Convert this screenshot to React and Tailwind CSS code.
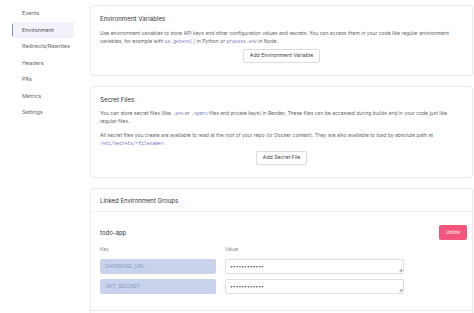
import React from "react";

const Code = ({ children }) => (
  <code className="font-['Liberation_Mono',monospace] text-[4.6px] leading-none text-[#6a6fc0]">{children}</code>
);

const navItems = ["Events", "Environment", "Redirects/Rewrites", "Headers", "PRs", "Metrics", "Settings"];

export default function App() {
  return (
    <div className="w-[474px] h-[313px] overflow-hidden bg-white flex font-['Inter',sans-serif] text-[#555]">
      <aside className="w-[90px] shrink-0 pt-[5px] pl-[12px]">
        <ul className="flex flex-col">
          {navItems.map((n) => (
            <li
              key={n}
              className={
                "h-[16.5px] flex items-center pl-[10px] w-[62px] text-[5.4px] " +
                (n === "Environment"
                  ? "relative bg-[#f2f3fa] text-[#555]"
                  : "text-[#666]")
              }
            >
              {n === "Environment" && (
                <span className="absolute left-0 top-[2px] bottom-[2px] w-[1px] bg-[#8c8fb3]" />
              )}
              {n}
            </li>
          ))}
        </ul>
      </aside>
      <main className="flex-1 min-w-0 pt-[5px] pr-[1px] flex flex-col gap-[10px]">
        <section className="shrink-0 border border-[#ebebeb] rounded-[3px] px-[9px] pt-[9px] pb-[9px] h-[71px] flex flex-col">
          <h2 className="text-[6.2px] text-[#333] leading-[8px]">Environment Variables</h2>
          <p className="mt-[6px] text-[5px] leading-[8px] text-[#666]">
            Use environment variables to store API keys and other configuration values and secrets. You can access them in your code like regular environment variables, for example with <Code>os.getenv()</Code> in Python or <Code>process.env</Code> in Node.
          </p>
          <div className="mt-[4px] flex justify-center">
            <button className="h-[14px] px-[6px] border border-[#dcdcdc] rounded-[2px] text-[5.2px] text-[#444] bg-white">
              Add Environment Variable
            </button>
          </div>
        </section>
        <section className="shrink-0 border border-[#ebebeb] rounded-[3px] px-[9px] pt-[9px] h-[92px] flex flex-col">
          <h2 className="text-[6.2px] text-[#333] leading-[8px]">Secret Files</h2>
          <p className="mt-[5px] text-[5px] leading-[8px] text-[#666]">
            You can store secret files (like <Code>.env</Code> or <Code>.npmrc</Code> files and private keys) in Render. These files can be accessed during builds and in your code just like regular files.
          </p>
          <p className="mt-[6px] text-[5px] leading-[8px] text-[#666]">
            All secret files you create are available to read at the root of your repo (or Docker context). They are also available to load by absolute path at <Code>/etc/secrets/&lt;filename&gt;</Code>.
          </p>
          <div className="mt-[4px] flex justify-center">
            <button className="h-[14px] px-[6px] border border-[#dcdcdc] rounded-[2px] text-[5.2px] text-[#444] bg-white">
              Add Secret File
            </button>
          </div>
        </section>
        <section className="shrink-0 border border-[#ebebeb] rounded-[3px] flex flex-col h-[140px]">
          <div className="h-[23px] px-[9px] flex items-center border-b border-[#efefef]">
            <h2 className="text-[6px] text-[#333]">Linked Environment Groups</h2>
          </div>
          <div className="px-[9px] pt-[13px] pb-[16px] border-b border-[#e6e6e6]">
            <div className="flex items-center justify-between h-[15px]">
              <span className="text-[6px] text-[#333]">todo-app</span>
              <button className="w-[28px] h-[15px] rounded-[2px] bg-[#f4557c] text-white text-[4.8px] -mr-[4px]">Unlink</button>
            </div>
            <div className="mt-[6px] grid grid-cols-[116px_179px] gap-x-[9px] gap-y-[5px] text-[5px]">
              <span className="h-[8px] flex items-center text-[#888]">Key</span>
              <span className="h-[8px] flex items-center text-[#888]">Value</span>
              <div className="h-[15px] rounded-[2px] bg-[#c8d2ea] flex items-center pl-[5px] font-['Liberation_Sans',sans-serif] text-[5.2px] text-[#8f9dc6] uppercase">DATABASE_URL</div>
              <div className="h-[15px] rounded-[2px] border border-[#dedede] relative flex items-center pl-[4px] text-[5px] text-[#555]">
                ••••••••••••
                <span className="absolute right-[1px] bottom-[1px] text-[4px] text-[#999] leading-none">◢</span>
              </div>
              <div className="h-[15px] rounded-[2px] bg-[#c8d2ea] flex items-center pl-[5px] font-['Liberation_Sans',sans-serif] text-[5.2px] text-[#8f9dc6] uppercase">JWT_SECRET</div>
              <div className="h-[15px] rounded-[2px] border border-[#dedede] relative flex items-center pl-[4px] text-[5px] text-[#555]">
                ••••••••••••
                <span className="absolute right-[1px] bottom-[1px] text-[4px] text-[#999] leading-none">◢</span>
              </div>
            </div>
          </div>
        </section>
      </main>
    </div>
  );
}
